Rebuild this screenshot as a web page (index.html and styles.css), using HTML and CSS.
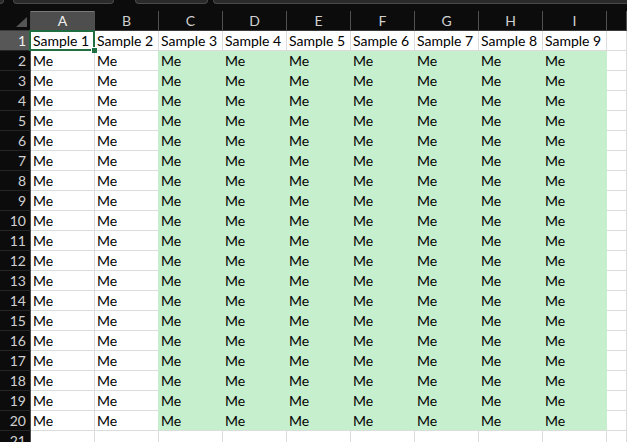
FILE: index.html
```html
<!DOCTYPE html>
<html>
<head>
<meta charset="utf-8">
<link rel="stylesheet" href="styles.css">
</head>
<body>
<div class="tabs"><span class="tab t0"></span><span class="tab t1"></span><span class="tab t2"></span><span class="tab t3"></span></div>
<div class="sheet">
  <div class="row head">
    <div class="corner"><svg width="31" height="20" viewBox="0 0 31 20"><polygon points="27,6 27,16 16,16" fill="#555"/></svg></div>
    <div class="ch sel">A</div><div class="ch">B</div><div class="ch">C</div><div class="ch">D</div><div class="ch">E</div><div class="ch">F</div><div class="ch">G</div><div class="ch">H</div><div class="ch">I</div><div class="ch"></div>
  </div>
  <div class="row">
    <div class="rh sel">1</div>
    <div class="c active">Sample 1</div><div class="c">Sample 2</div><div class="c">Sample 3</div><div class="c">Sample 4</div><div class="c">Sample 5</div><div class="c">Sample 6</div><div class="c">Sample 7</div><div class="c">Sample 8</div><div class="c">Sample 9</div><div class="c"></div>
  </div>
  <div class="row fill"><div class="rh">2</div><div class="c">Me</div><div class="c">Me</div><div class="c">Me</div><div class="c">Me</div><div class="c">Me</div><div class="c">Me</div><div class="c">Me</div><div class="c">Me</div><div class="c">Me</div><div class="c"></div></div>
  <div class="row fill"><div class="rh">3</div><div class="c">Me</div><div class="c">Me</div><div class="c">Me</div><div class="c">Me</div><div class="c">Me</div><div class="c">Me</div><div class="c">Me</div><div class="c">Me</div><div class="c">Me</div><div class="c"></div></div>
  <div class="row fill"><div class="rh">4</div><div class="c">Me</div><div class="c">Me</div><div class="c">Me</div><div class="c">Me</div><div class="c">Me</div><div class="c">Me</div><div class="c">Me</div><div class="c">Me</div><div class="c">Me</div><div class="c"></div></div>
  <div class="row fill"><div class="rh">5</div><div class="c">Me</div><div class="c">Me</div><div class="c">Me</div><div class="c">Me</div><div class="c">Me</div><div class="c">Me</div><div class="c">Me</div><div class="c">Me</div><div class="c">Me</div><div class="c"></div></div>
  <div class="row fill"><div class="rh">6</div><div class="c">Me</div><div class="c">Me</div><div class="c">Me</div><div class="c">Me</div><div class="c">Me</div><div class="c">Me</div><div class="c">Me</div><div class="c">Me</div><div class="c">Me</div><div class="c"></div></div>
  <div class="row fill"><div class="rh">7</div><div class="c">Me</div><div class="c">Me</div><div class="c">Me</div><div class="c">Me</div><div class="c">Me</div><div class="c">Me</div><div class="c">Me</div><div class="c">Me</div><div class="c">Me</div><div class="c"></div></div>
  <div class="row fill"><div class="rh">8</div><div class="c">Me</div><div class="c">Me</div><div class="c">Me</div><div class="c">Me</div><div class="c">Me</div><div class="c">Me</div><div class="c">Me</div><div class="c">Me</div><div class="c">Me</div><div class="c"></div></div>
  <div class="row fill"><div class="rh">9</div><div class="c">Me</div><div class="c">Me</div><div class="c">Me</div><div class="c">Me</div><div class="c">Me</div><div class="c">Me</div><div class="c">Me</div><div class="c">Me</div><div class="c">Me</div><div class="c"></div></div>
  <div class="row fill"><div class="rh">10</div><div class="c">Me</div><div class="c">Me</div><div class="c">Me</div><div class="c">Me</div><div class="c">Me</div><div class="c">Me</div><div class="c">Me</div><div class="c">Me</div><div class="c">Me</div><div class="c"></div></div>
  <div class="row fill"><div class="rh">11</div><div class="c">Me</div><div class="c">Me</div><div class="c">Me</div><div class="c">Me</div><div class="c">Me</div><div class="c">Me</div><div class="c">Me</div><div class="c">Me</div><div class="c">Me</div><div class="c"></div></div>
  <div class="row fill"><div class="rh">12</div><div class="c">Me</div><div class="c">Me</div><div class="c">Me</div><div class="c">Me</div><div class="c">Me</div><div class="c">Me</div><div class="c">Me</div><div class="c">Me</div><div class="c">Me</div><div class="c"></div></div>
  <div class="row fill"><div class="rh">13</div><div class="c">Me</div><div class="c">Me</div><div class="c">Me</div><div class="c">Me</div><div class="c">Me</div><div class="c">Me</div><div class="c">Me</div><div class="c">Me</div><div class="c">Me</div><div class="c"></div></div>
  <div class="row fill"><div class="rh">14</div><div class="c">Me</div><div class="c">Me</div><div class="c">Me</div><div class="c">Me</div><div class="c">Me</div><div class="c">Me</div><div class="c">Me</div><div class="c">Me</div><div class="c">Me</div><div class="c"></div></div>
  <div class="row fill"><div class="rh">15</div><div class="c">Me</div><div class="c">Me</div><div class="c">Me</div><div class="c">Me</div><div class="c">Me</div><div class="c">Me</div><div class="c">Me</div><div class="c">Me</div><div class="c">Me</div><div class="c"></div></div>
  <div class="row fill"><div class="rh">16</div><div class="c">Me</div><div class="c">Me</div><div class="c">Me</div><div class="c">Me</div><div class="c">Me</div><div class="c">Me</div><div class="c">Me</div><div class="c">Me</div><div class="c">Me</div><div class="c"></div></div>
  <div class="row fill"><div class="rh">17</div><div class="c">Me</div><div class="c">Me</div><div class="c">Me</div><div class="c">Me</div><div class="c">Me</div><div class="c">Me</div><div class="c">Me</div><div class="c">Me</div><div class="c">Me</div><div class="c"></div></div>
  <div class="row fill"><div class="rh">18</div><div class="c">Me</div><div class="c">Me</div><div class="c">Me</div><div class="c">Me</div><div class="c">Me</div><div class="c">Me</div><div class="c">Me</div><div class="c">Me</div><div class="c">Me</div><div class="c"></div></div>
  <div class="row fill"><div class="rh">19</div><div class="c">Me</div><div class="c">Me</div><div class="c">Me</div><div class="c">Me</div><div class="c">Me</div><div class="c">Me</div><div class="c">Me</div><div class="c">Me</div><div class="c">Me</div><div class="c"></div></div>
  <div class="row fill end"><div class="rh">20</div><div class="c">Me</div><div class="c">Me</div><div class="c">Me</div><div class="c">Me</div><div class="c">Me</div><div class="c">Me</div><div class="c">Me</div><div class="c">Me</div><div class="c">Me</div><div class="c"></div></div>
  <div class="row"><div class="rh">21</div><div class="c"></div><div class="c"></div><div class="c"></div><div class="c"></div><div class="c"></div><div class="c"></div><div class="c"></div><div class="c"></div><div class="c"></div><div class="c"></div></div>
</div>
</body>
</html>
```
FILE: styles.css
```css
html, body {
  margin: 0;
  padding: 0;
  width: 627px;
  height: 442px;
  overflow: hidden;
  background: #0c0c0c;
  font-family: "Lato", "Noto Sans", sans-serif;
  font-size: 14px;
}

.tabs {
  display: flex;
  align-items: flex-start;
  height: 11px;
  background: #0c0c0c;
  overflow: hidden;
}

.tab {
  box-sizing: border-box;
  height: 4px;
  background: #2a2a2a;
  border: 1px solid #4a4a4a;
  border-top: 0;
  border-radius: 0 0 5px 5px;
  flex: none;
}

.t0 { width: 4px; border-left: 0; border-radius: 0 0 4px 0; }
.t1 { width: 101px; margin-left: 9px; }
.t2 { width: 73px; margin-left: 21px; }
.t3 { flex: 1; margin-left: 5px; border-right: 0; border-radius: 0 0 0 5px; }

.sheet {
  width: 627px;
  overflow: hidden;
}

.row {
  display: grid;
  grid-template-columns: 31px repeat(9, 64px) 1fr;
  height: 20px;
}

.row > div {
  box-sizing: border-box;
  height: 20px;
  white-space: nowrap;
  overflow: hidden;
}

.corner {
  background: #0c0c0c;
  border-right: 1px solid #4a4a4a;
  border-bottom: 1px solid #3a3a3a;
}

.corner svg { display: block; }

.ch {
  background: #0c0c0c;
  color: #d0d0d0;
  text-align: center;
  line-height: 19px;
  border-right: 1px solid #505050;
  border-bottom: 1px solid #3a3a3a;
}

.ch.sel {
  background: #4e4e4e;
  color: #f0f0f0;
  box-shadow: inset 0 1px 0 #7a7a7a;
}

.rh {
  background: #0c0c0c;
  color: #d0d0d0;
  text-align: right;
  padding: 1px 4px 0 0;
  line-height: 18px;
  border-right: 1px solid #4a4a4a;
  border-bottom: 1px solid #262626;
}

.rh.sel {
  background: #575757;
  color: #f2f2f2;
}

.c {
  background: #ffffff;
  color: #000000;
  padding: 1px 0 0 2px;
  line-height: 18px;
  border-right: 1px solid #dcdcdc;
  border-bottom: 1px solid #dcdcdc;
}

.fill .c:nth-child(n+4):nth-child(-n+10) {
  background: #c6efce;
  border-right-color: #c6efce;
  border-bottom-color: #c6efce;
}

.fill .c:nth-child(3) { border-right-color: #c6efce; }
.fill .c:nth-child(10) { border-right-color: #dcdcdc; }
.fill.end .c:nth-child(n+4):nth-child(-n+10) { border-bottom-color: #dcdcdc; }

.row > .c.active {
  position: relative;
  overflow: visible;
  z-index: 2;
}

.active::after {
  content: "";
  position: absolute;
  left: -2px;
  top: -1px;
  right: -1px;
  bottom: -1px;
  border: 2px solid #1e6e42;
  pointer-events: none;
}

.active::before {
  content: "";
  position: absolute;
  right: -3px;
  bottom: -3px;
  width: 5px;
  height: 5px;
  background: #1e6e42;
  border-left: 1px solid #ffffff;
  border-top: 1px solid #ffffff;
  z-index: 3;
}
```
